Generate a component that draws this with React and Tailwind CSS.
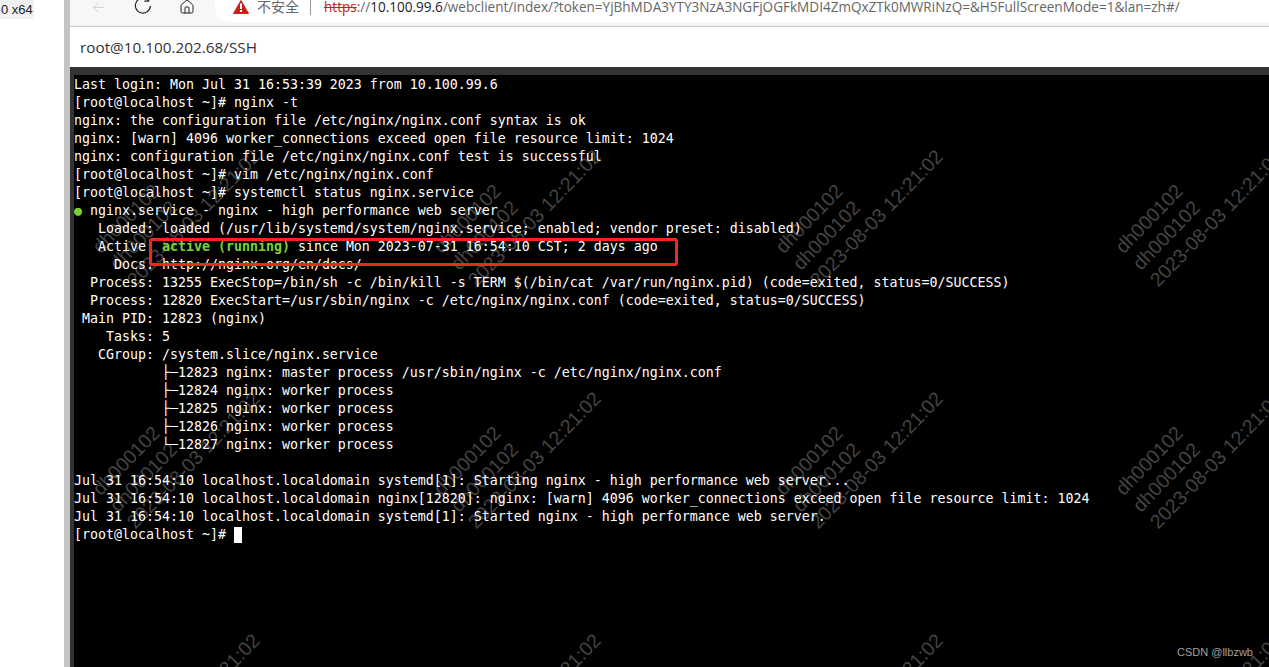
import { ArrowLeft, Home } from "lucide-react";

const termLines = [
  "Last login: Mon Jul 31 16:53:39 2023 from 10.100.99.6",
  "[root@localhost ~]# nginx -t",
  "nginx: the configuration file /etc/nginx/nginx.conf syntax is ok",
  "nginx: [warn] 4096 worker_connections exceed open file resource limit: 1024",
  "nginx: configuration file /etc/nginx/nginx.conf test is successful",
  "[root@localhost ~]# vim /etc/nginx/nginx.conf",
  "[root@localhost ~]# systemctl status nginx.service",
  "DOT",
  "   Loaded: loaded (/usr/lib/systemd/system/nginx.service; enabled; vendor preset: disabled)",
  "ACTIVE",
  "     Docs: http://nginx.org/en/docs/",
  "  Process: 13255 ExecStop=/bin/sh -c /bin/kill -s TERM $(/bin/cat /var/run/nginx.pid) (code=exited, status=0/SUCCESS)",
  "  Process: 12820 ExecStart=/usr/sbin/nginx -c /etc/nginx/nginx.conf (code=exited, status=0/SUCCESS)",
  " Main PID: 12823 (nginx)",
  "    Tasks: 5",
  "   CGroup: /system.slice/nginx.service",
  "           ├─12823 nginx: master process /usr/sbin/nginx -c /etc/nginx/nginx.conf",
  "           ├─12824 nginx: worker process",
  "           ├─12825 nginx: worker process",
  "           ├─12826 nginx: worker process",
  "           └─12827 nginx: worker process",
  "",
  "Jul 31 16:54:10 localhost.localdomain systemd[1]: Starting nginx - high performance web server...",
  "Jul 31 16:54:10 localhost.localdomain nginx[12820]: nginx: [warn] 4096 worker_connections exceed open file resource limit: 1024",
  "Jul 31 16:54:10 localhost.localdomain systemd[1]: Started nginx - high performance web server.",
];

// tiled watermark, one stamp per spot on the terminal
const stamps = [
  { id: 1, left: "left-[97px]", top: "top-[132px]" },
  { id: 2, left: "left-[438px]", top: "top-[132px]" },
  { id: 3, left: "left-[780px]", top: "top-[132px]" },
  { id: 4, left: "left-[1120px]", top: "top-[132px]" },
  { id: 5, left: "left-[97px]", top: "top-[374px]" },
  { id: 6, left: "left-[438px]", top: "top-[374px]" },
  { id: 7, left: "left-[780px]", top: "top-[374px]" },
  { id: 8, left: "left-[1120px]", top: "top-[374px]" },
  { id: 9, left: "left-[97px]", top: "top-[616px]" },
  { id: 10, left: "left-[438px]", top: "top-[616px]" },
  { id: 11, left: "left-[780px]", top: "top-[616px]" },
  { id: 12, left: "left-[1120px]", top: "top-[616px]" },
];

const Stamp = ({ left, top }) => (
  <div className={`absolute ${left} ${top} w-[163px] h-[132px]`}>
    <div className="absolute left-1/2 top-1/2 w-[190px] -translate-x-1/2 -translate-y-1/2 -rotate-[46deg] font-['Liberation_Sans',sans-serif] text-[19.5px] leading-[24px] text-[#444444] whitespace-nowrap">
      <div>dh000102</div>
      <div>dh000102</div>
      <div>2023-08-03 12:21:02</div>
    </div>
  </div>
);

const TermLine = ({ text }) => {
  if (text === "DOT") {
    return (
      <div className="h-[18px] whitespace-pre">
        <span className="text-[#7fd132]">●</span> nginx.service - nginx - high performance web server
      </div>
    );
  }
  if (text === "ACTIVE") {
    return (
      <div className="h-[18px] whitespace-pre">
        {"   Active: "}
        <span className="font-bold text-[#7fd132]">active (running)</span> since Mon 2023-07-31 16:54:10 CST; 2 days ago
      </div>
    );
  }
  return <div className="h-[18px] whitespace-pre">{text}</div>;
};

export default function App() {
  return (
    <div className="relative flex h-[667px] w-[1269px] overflow-hidden bg-white">
      <div className="w-[64px] shrink-0">
        <div className="flex h-[19px] w-[34px] items-center bg-[#f0f0f0] pl-[1px] font-['Liberation_Sans',sans-serif] text-[13px] text-[#222222]">
          0 x64
        </div>
      </div>
      <div className="w-[6px] shrink-0 bg-[#c4c4c4]" />

      <div className="flex min-w-0 flex-1 flex-col">
        <div className="flex h-[27px] shrink-0 items-start border-b border-[#c4c4c4] bg-[#f7f7f7]">
          <div className="flex h-[14px] items-center pl-[20px]">
            <ArrowLeft size={17} strokeWidth={1.1} className="text-[#c8c8c8]" />
            <svg width="18" height="18" viewBox="0 0 18 18" fill="none" stroke="#222222" strokeWidth="1.2" className="ml-[27px] -mt-[3px] shrink-0">
              <path d="M14.5 3.6 A7.5 7.5 0 1 0 16.4 9" />
              <path d="M14.6 0 V4.2 H10.4" />
            </svg>
            <Home size={16} strokeWidth={1.5} className="ml-[27px] -mt-[1px] text-[#222222]" />
          </div>
          <div className="ml-[20px] flex h-[22px] flex-1 items-start rounded-bl-[14px] bg-white pl-[18px] font-['Open_Sans','Noto_Sans_CJK_SC',sans-serif] text-[13.55px] leading-[14px] text-[#666666] whitespace-nowrap">
            <svg width="16" height="14" viewBox="0 0 16 14" className="shrink-0">
              <path d="M8 0.5 L15.5 13.5 L0.5 13.5 Z" fill="#c9201c" stroke="#c9201c" strokeLinejoin="round" />
              <rect x="7" y="3.5" width="2" height="5.5" fill="#ffffff" />
              <rect x="7" y="10" width="2" height="2" fill="#ffffff" />
            </svg>
            <span className="ml-[8px] text-[14px] text-[#666666]">不安全</span>
            <span className="ml-[11px] mr-[13px] h-[15px] w-px bg-[#999999]" />
            <span className="text-[#c9201c] line-through">https</span>
            <span>://</span>
            <span className="text-[#222222]">10.100.99.6</span>
            <span>/webclient/index/?token=YjBhMDA3YTY3NzA3NGFjOGFkMDI4ZmQxZTk0MWRiNzQ=&amp;H5FullScreenMode=1&amp;lan=zh#/</span>
          </div>
        </div>

        <div className="flex h-[40px] shrink-0 items-center pl-[10px] font-['Open_Sans',sans-serif] text-[15.3px] text-[#333333]">
          root@10.100.202.68/SSH
        </div>

        <div className="h-[8px] shrink-0 bg-[#333333]" />

        <div className="flex min-h-0 flex-1">
          <div className="w-[4px] shrink-0 bg-[#333333]" />
          <div className="flex-1 bg-black" />
        </div>
      </div>

      {stamps.map((s) => (
        <Stamp key={s.id} left={s.left} top={s.top} />
      ))}

      <div className="absolute left-[74px] top-[76px] font-['DejaVu_Sans_Mono',monospace] text-[13.29px] leading-[18px] text-white">
        {termLines.map((line, i) => (
          <TermLine key={i} text={line} />
        ))}
        <div className="flex h-[18px] items-center whitespace-pre">
          [root@localhost ~]# <span className="h-[16px] w-[8px] bg-white" />
        </div>
      </div>

      <div className="absolute left-[149px] top-[238px] h-[28px] w-[529px] rounded-[3px] border-[3px] border-[#f0281c]" />

      <div className="absolute right-[16px] top-[644px] font-['Liberation_Sans',sans-serif] text-[11px] text-[#a0a0a0]">
        CSDN @llbzwb
      </div>
    </div>
  );
}
